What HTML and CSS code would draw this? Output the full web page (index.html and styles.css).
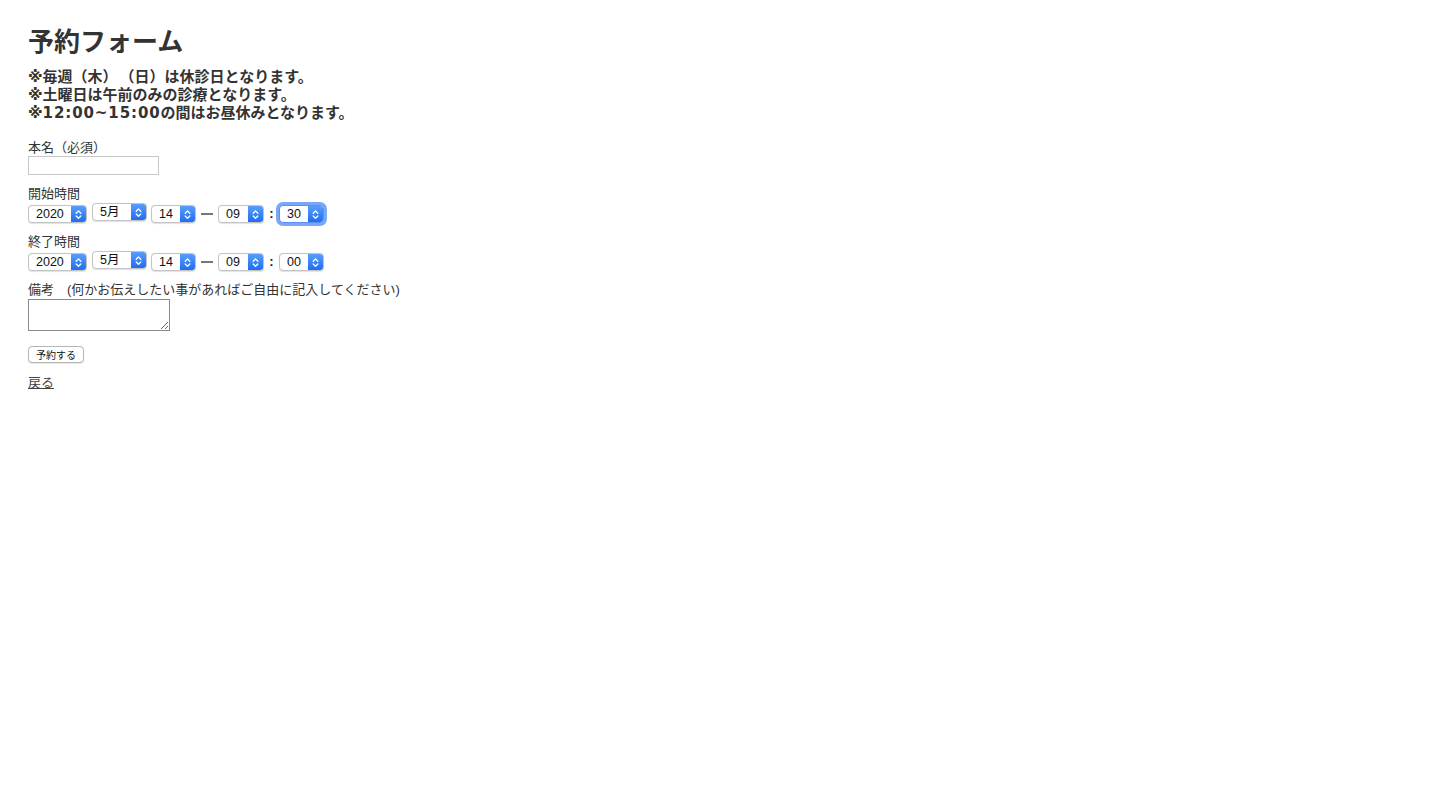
FILE: index.html
```html
<!DOCTYPE html>
<html lang="ja">
<head>
<meta charset="utf-8">
<title>予約フォーム</title>
<link rel="stylesheet" href="styles.css">
</head>
<body>
<div class="page">
  <h1 class="title">予約フォーム</h1>
  <div class="notes">
    <p>※毎週（木）<span class="gap"></span>（日）は休診日となります。</p>
    <p>※土曜日は午前のみの診療となります。</p>
    <p>※<span class="num">12:00~15:00</span>の間はお昼休みとなります。</p>
  </div>
  <form class="form">
    <div class="field">
      <label class="label">本名（必須）</label>
      <input class="text-input" type="text">
    </div>
    <div class="field">
      <label class="label">開始時間</label>
      <div class="row">
        <span class="sel w-year"><select><option>2020</option></select><span class="arrow"><svg viewBox="0 0 15 17" width="15" height="17"><path d="M5.2 7.2 L7.5 4.9 L9.8 7.2 M5.2 10 L7.5 12.3 L9.8 10" fill="none" stroke="#fff" stroke-width="1.3" stroke-linecap="round" stroke-linejoin="round"/></svg></span></span>
        <span class="sel w-month raised"><select><option>5月</option></select><span class="arrow"><svg viewBox="0 0 15 17" width="15" height="17"><path d="M5.2 7.2 L7.5 4.9 L9.8 7.2 M5.2 10 L7.5 12.3 L9.8 10" fill="none" stroke="#fff" stroke-width="1.3" stroke-linecap="round" stroke-linejoin="round"/></svg></span></span>
        <span class="sel w-day"><select><option>14</option></select><span class="arrow"><svg viewBox="0 0 15 17" width="15" height="17"><path d="M5.2 7.2 L7.5 4.9 L9.8 7.2 M5.2 10 L7.5 12.3 L9.8 10" fill="none" stroke="#fff" stroke-width="1.3" stroke-linecap="round" stroke-linejoin="round"/></svg></span></span>
        <span class="dash"></span>
        <span class="sel w-hour"><select><option>09</option></select><span class="arrow"><svg viewBox="0 0 15 17" width="15" height="17"><path d="M5.2 7.2 L7.5 4.9 L9.8 7.2 M5.2 10 L7.5 12.3 L9.8 10" fill="none" stroke="#fff" stroke-width="1.3" stroke-linecap="round" stroke-linejoin="round"/></svg></span></span>
        <span class="colon">:</span>
        <span class="sel w-min focused"><select><option>30</option></select><span class="arrow"><svg viewBox="0 0 15 17" width="15" height="17"><path d="M5.2 7.2 L7.5 4.9 L9.8 7.2 M5.2 10 L7.5 12.3 L9.8 10" fill="none" stroke="#fff" stroke-width="1.3" stroke-linecap="round" stroke-linejoin="round"/></svg></span></span>
      </div>
    </div>
    <div class="field field-tight">
      <label class="label">終了時間</label>
      <div class="row">
        <span class="sel w-year"><select><option>2020</option></select><span class="arrow"><svg viewBox="0 0 15 17" width="15" height="17"><path d="M5.2 7.2 L7.5 4.9 L9.8 7.2 M5.2 10 L7.5 12.3 L9.8 10" fill="none" stroke="#fff" stroke-width="1.3" stroke-linecap="round" stroke-linejoin="round"/></svg></span></span>
        <span class="sel w-month raised"><select><option>5月</option></select><span class="arrow"><svg viewBox="0 0 15 17" width="15" height="17"><path d="M5.2 7.2 L7.5 4.9 L9.8 7.2 M5.2 10 L7.5 12.3 L9.8 10" fill="none" stroke="#fff" stroke-width="1.3" stroke-linecap="round" stroke-linejoin="round"/></svg></span></span>
        <span class="sel w-day"><select><option>14</option></select><span class="arrow"><svg viewBox="0 0 15 17" width="15" height="17"><path d="M5.2 7.2 L7.5 4.9 L9.8 7.2 M5.2 10 L7.5 12.3 L9.8 10" fill="none" stroke="#fff" stroke-width="1.3" stroke-linecap="round" stroke-linejoin="round"/></svg></span></span>
        <span class="dash"></span>
        <span class="sel w-hour"><select><option>09</option></select><span class="arrow"><svg viewBox="0 0 15 17" width="15" height="17"><path d="M5.2 7.2 L7.5 4.9 L9.8 7.2 M5.2 10 L7.5 12.3 L9.8 10" fill="none" stroke="#fff" stroke-width="1.3" stroke-linecap="round" stroke-linejoin="round"/></svg></span></span>
        <span class="colon">:</span>
        <span class="sel w-min"><select><option>00</option></select><span class="arrow"><svg viewBox="0 0 15 17" width="15" height="17"><path d="M5.2 7.2 L7.5 4.9 L9.8 7.2 M5.2 10 L7.5 12.3 L9.8 10" fill="none" stroke="#fff" stroke-width="1.3" stroke-linecap="round" stroke-linejoin="round"/></svg></span></span>
      </div>
    </div>
    <div class="field">
      <label class="label">備考　(何かお伝えしたい事があればご自由に記入してください)</label>
      <textarea class="memo"></textarea>
    </div>
    <div class="actions">
      <button type="button" class="submit">予約する</button>
    </div>
    <a class="back" href="#">戻る</a>
  </form>
</div>
</body>
</html>
```

FILE: styles.css
```css
* { box-sizing: border-box; }
html, body { margin: 0; padding: 0; background: #fff; }
body {
  font-family: "Liberation Sans", "Noto Sans CJK JP", sans-serif;
  color: #333;
  font-size: 13px;
}
.page { padding: 26px 28px; }
.title {
  margin: 0;
  font-size: 26px;
  line-height: 32px;
  font-weight: bold;
  color: #333;
}
.notes { margin-top: 10px; }
.notes p {
  margin: 0;
  font-family: "DejaVu Sans", "Noto Sans CJK JP", sans-serif;
  font-size: 15px;
  line-height: 18px;
  font-weight: bold;
  color: #333;
}
.num { letter-spacing: 0.9px; }
.gap { display: inline-block; width: 2px; }
.form { margin-top: 17px; }
.field { display: flex; flex-direction: column; align-items: flex-start; margin-bottom: 10px; }
.field-tight { margin-bottom: 10px; }
.label { font-size: 13px; line-height: 17px; color: #333; }
.text-input {
  width: 131px; height: 19px;
  border: 1px solid #c8c8c8;
  padding: 0 2px;
  font-size: 12px;
  margin: 0;
}
.row { display: flex; align-items: flex-start; height: 18px; margin-top: 3px; margin-bottom: 0; }
.sel {
  display: inline-flex;
  height: 18px;
  border: 1px solid #c4c4c4;
  border-radius: 4px;
  background: #fff;
  overflow: hidden;
  box-shadow: 0 0.5px 1px rgba(0,0,0,0.12);
}
.sel select {
  appearance: none;
  -webkit-appearance: none;
  border: none;
  background: transparent;
  margin: 0;
  padding: 0 0 0 7px;
  flex: 1;
  min-width: 0;
  font-family: "Liberation Sans", "Noto Sans CJK JP", sans-serif;
  font-size: 12.5px;
  line-height: 16px;
  color: #111;
  outline: none;
}
.arrow {
  width: 15px;
  flex: none;
  background: linear-gradient(#5a9dfb, #1f6ef2);
  display: flex;
  align-items: center;
  justify-content: center;
}
.arrow svg { display: block; }
.w-year { width: 59px; margin-right: 5px; }
.w-month { width: 55px; margin-right: 4px; }
.w-day { width: 45px; }
.w-hour { width: 46px; }
.w-min { width: 45px; }
.raised { margin-top: -2px; }
.dash {
  width: 12px;
  height: 2px;
  margin: 8px 5px 0 5px;
  background: #777;
}
.colon { width: 15px; text-align: center; color: #111; font-size: 13px; font-weight: bold; line-height: 17px; }
.focused { box-shadow: 0 0 0 3px #7aa7f7; border-color: #5b8ff3; }
.memo {
  width: 142px; height: 32px;
  border: 1px solid #8a8a8a;
  margin: 1px 0 0 0;
  padding: 2px;
  font-size: 12px;
  resize: both;
}
.actions { margin-top: 15px; }
.submit {
  width: 56px; height: 17px;
  border: 1px solid #b5b5b5;
  border-radius: 4px;
  background: #fff;
  font-family: "Noto Sans CJK JP", sans-serif;
  font-size: 10px;
  line-height: 13px;
  padding: 0;
  color: #111;
  box-shadow: 0 0.5px 1px rgba(0,0,0,0.1);
}
.back {
  display: inline-block;
  margin-top: 9px;
  font-size: 13px;
  color: #444;
  text-decoration: underline;
}
```
